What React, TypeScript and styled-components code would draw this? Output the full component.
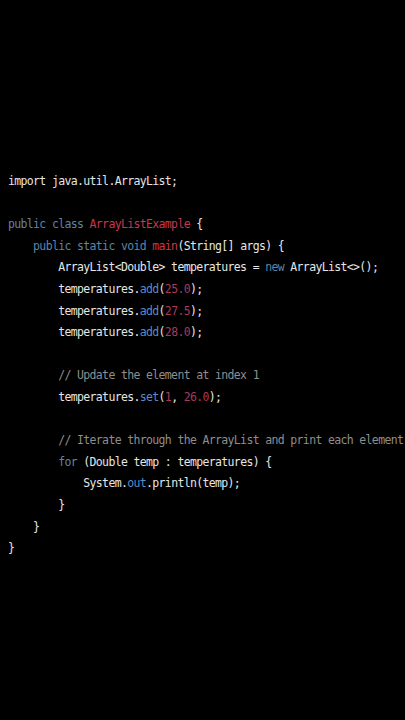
import React from "react";
import styled, { createGlobalStyle } from "styled-components";

const GlobalStyle = createGlobalStyle`
  html, body {
    margin: 0;
    padding: 0;
    background: #000000;
  }
  #root {
    min-height: 720px;
    background: #000000;
  }
`;

const Screen = styled.div`
  width: 405px;
  height: 720px;
  background: #000000;
  overflow: hidden;
  display: flex;
  flex-direction: column;
  padding: 171px 0 0 8px;
  box-sizing: border-box;
`;

const Code = styled.pre`
  margin: 0;
  display: flex;
  flex-direction: column;
  font-family: "DejaVu Sans Mono", "Liberation Mono", monospace;
  font-size: 11.5px;
  letter-spacing: -0.65px;
  line-height: 21.6px;
  color: #e4e4e4;
  white-space: pre;
`;

const Line = styled.div`
  height: 21.6px;
  white-space: pre;
`;

type Kind = "kw" | "cls" | "num" | "fn" | "cm" | "txt";

const colors: Record<Kind, string> = {
  kw: "#5f84a6",
  cls: "#c8374f",
  num: "#a93a5e",
  fn: "#5a8cc0",
  cm: "#8e8e8e",
  txt: "#e6e6e6",
};

const Tok = styled.span<{ $k: Kind }>`
  color: ${(p) => colors[p.$k]};
`;

type Part = [Kind, string];

const lines: Part[][] = [
  [["txt", "import java.util.ArrayList;"]],
  [],
  [["kw", "public class "], ["cls", "ArrayListExample"], ["txt", " {"]],
  [["kw", "    public static void "], ["cls", "main"], ["txt", "(String[] args) {"]],
  [["txt", "        ArrayList<Double> temperatures = "], ["kw", "new"], ["txt", " ArrayList<>();"]],
  [["txt", "        temperatures."], ["fn", "add"], ["txt", "("], ["num", "25.0"], ["txt", ");"]],
  [["txt", "        temperatures."], ["fn", "add"], ["txt", "("], ["num", "27.5"], ["txt", ");"]],
  [["txt", "        temperatures."], ["fn", "add"], ["txt", "("], ["num", "28.0"], ["txt", ");"]],
  [],
  [["cm", "        // Update the element at index 1"]],
  [["txt", "        temperatures."], ["fn", "set"], ["txt", "("], ["num", "1"], ["txt", ", "], ["num", "26.0"], ["txt", ");"]],
  [],
  [["cm", "        // Iterate through the ArrayList and print each element"]],
  [["kw", "        for"], ["txt", " (Double temp : temperatures) {"]],
  [["txt", "            System."], ["fn", "out"], ["txt", ".println(temp);"]],
  [["txt", "        }"]],
  [["txt", "    }"]],
  [["txt", "}"]],
];

export default function App() {
  return (
    <>
      <GlobalStyle />
      <Screen>
        <Code>
          {lines.map((parts, i) => (
            <Line key={i}>
              {parts.length === 0
                ? " "
                : parts.map(([k, t], j) => (
                    <Tok key={j} $k={k}>
                      {t}
                    </Tok>
                  ))}
            </Line>
          ))}
        </Code>
      </Screen>
    </>
  );
}
